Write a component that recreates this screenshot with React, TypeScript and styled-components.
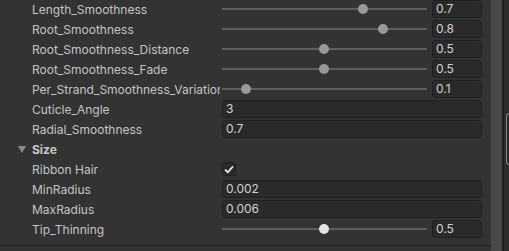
import React, { FC, ReactElement } from 'react';
import styled, { createGlobalStyle } from 'styled-components';

type Field =
  | { kind: 'slider'; label: string; value: number; hot?: boolean }
  | { kind: 'text'; label: string; value: string }
  | { kind: 'check'; label: string; checked: boolean }
  | { kind: 'header'; label: string };

const fields: Field[] = [
  { kind: 'slider', label: 'Length_Smoothness', value: 0.7 },
  { kind: 'slider', label: 'Root_Smoothness', value: 0.8 },
  { kind: 'slider', label: 'Root_Smoothness_Distance', value: 0.5 },
  { kind: 'slider', label: 'Root_Smoothness_Fade', value: 0.5 },
  { kind: 'slider', label: 'Per_Strand_Smoothness_Variation', value: 0.1 },
  { kind: 'text', label: 'Cuticle_Angle', value: '3' },
  { kind: 'text', label: 'Radial_Smoothness', value: '0.7' },
  { kind: 'header', label: 'Size' },
  { kind: 'check', label: 'Ribbon Hair', checked: true },
  { kind: 'text', label: 'MinRadius', value: '0.002' },
  { kind: 'text', label: 'MaxRadius', value: '0.006' },
  { kind: 'slider', label: 'Tip_Thinning', value: 0.5, hot: true },
];

const Slider: FC<{ value: number; hot?: boolean }> = ({ value, hot }): ReactElement => (
  <>
    <Track>
      <TrackLine />
      <Thumb $hot={!!hot} style={{ left: `${value * 195}px` }} />
    </Track>
    <NumberBox>{value}</NumberBox>
  </>
);

const FieldRow: FC<{ field: Field }> = ({ field }): ReactElement => {
  if (field.kind === 'header') {
    return (
      <HeaderRow>
        <Foldout>
          <svg width="8" height="7" viewBox="0 0 8 7">
            <path d="M0 0 H8 L4 7 Z" fill="#8a8a8a" />
          </svg>
        </Foldout>
        <HeaderLabel>{field.label}</HeaderLabel>
      </HeaderRow>
    );
  }
  return (
    <Row>
      <Label>{field.label}</Label>
      <Control>
        {field.kind === 'slider' && <Slider value={field.value} hot={field.hot} />}
        {field.kind === 'text' && <WideBox>{field.value}</WideBox>}
        {field.kind === 'check' && (
          <CheckBox>
            {field.checked && (
              <svg width="10" height="9" viewBox="0 0 10 9">
                <path d="M1 4.6 L3.8 7.2 L9 1.4" stroke="#e8e8e8" strokeWidth="1.7" fill="none" />
              </svg>
            )}
          </CheckBox>
        )}
      </Control>
    </Row>
  );
};

export default function App(): ReactElement {
  return (
    <>
      <GlobalStyle />
      <Frame>
        <Inspector>
          <Rows>
            {fields.map((f) => (
              <FieldRow key={f.label} field={f} />
            ))}
          </Rows>
        </Inspector>
        <Scrollbar />
        <Divider />
        <SidePanel>
          <SideCard />
        </SidePanel>
      </Frame>
    </>
  );
}

const GlobalStyle = createGlobalStyle`
  body {
    margin: 0;
    background: #333333;
    font-family: Inter, "Noto Sans", sans-serif;
  }
`;

const Frame = styled.div`
  display: flex;
  width: 509px;
  height: 251px;
  overflow: hidden;
`;

const Inspector = styled.div`
  flex: none;
  width: 491px;
  background: #333333;
`;

const Rows = styled.div`
  display: flex;
  flex-direction: column;
  gap: 2px;
  height: 246px;
  box-sizing: border-box;
  border-bottom: 1px solid #232323;
  padding-right: 9px;
`;

const Row = styled.div`
  display: flex;
  align-items: center;
  height: 18px;
  padding-left: 32px;
`;

const HeaderRow = styled.div`
  display: flex;
  align-items: center;
  height: 18px;
  padding-left: 18px;
`;

const Foldout = styled.span`
  display: flex;
  width: 14px;
  svg {
    display: block;
  }
`;

const Label = styled.div`
  flex: none;
  width: 188px;
  margin-right: 2px;
  overflow: hidden;
  white-space: nowrap;
  font-size: 12px;
  color: #c4c4c4;
`;

const HeaderLabel = styled(Label)`
  font-weight: 700;
  color: #c8c8c8;
`;

const Control = styled.div`
  display: flex;
  align-items: center;
  flex: 1;
  height: 18px;
`;

const Track = styled.div`
  position: relative;
  flex: 1;
  height: 18px;
`;

const TrackLine = styled.div`
  position: absolute;
  left: 0;
  right: 0;
  top: 8px;
  height: 2px;
  background: #5e5e5e;
`;

const Thumb = styled.div<{ $hot: boolean }>`
  position: absolute;
  top: 4px;
  width: 10px;
  height: 10px;
  margin-left: -0.5px;
  border-radius: 50%;
  background: ${({ $hot }) => ($hot ? '#e4e4e4' : '#999999')};
`;

const InputBox = styled.div`
  box-sizing: border-box;
  height: 18px;
  padding: 0 3px;
  border: 1px solid #212121;
  border-radius: 3px;
  background: #2a2a2a;
  font-size: 12px;
  line-height: 16px;
  color: #d2d2d2;
  white-space: nowrap;
  overflow: hidden;
`;

const NumberBox = styled(InputBox)`
  flex: none;
  width: 50px;
  margin-left: 5px;
`;

const WideBox = styled(InputBox)`
  flex: 1;
`;

const CheckBox = styled.div`
  box-sizing: border-box;
  display: flex;
  align-items: center;
  justify-content: center;
  width: 14px;
  height: 14px;
  border: 1px solid #212121;
  border-radius: 3px;
  background: #2a2a2a;
`;

const Scrollbar = styled.div`
  flex: none;
  width: 11px;
  background: #484848;
`;

const Divider = styled.div`
  flex: none;
  width: 2px;
  background: #1c1c1c;
`;

const SidePanel = styled.div`
  flex: 1;
  display: flex;
  align-items: flex-start;
  padding-top: 113px;
  padding-left: 2px;
  background: #2c2c2c;
`;

const SideCard = styled.div`
  width: 20px;
  height: 50px;
  border: 1px solid #8a8a8a;
  border-right: none;
  border-radius: 4px 0 0 4px;
  background: #262626;
`;
